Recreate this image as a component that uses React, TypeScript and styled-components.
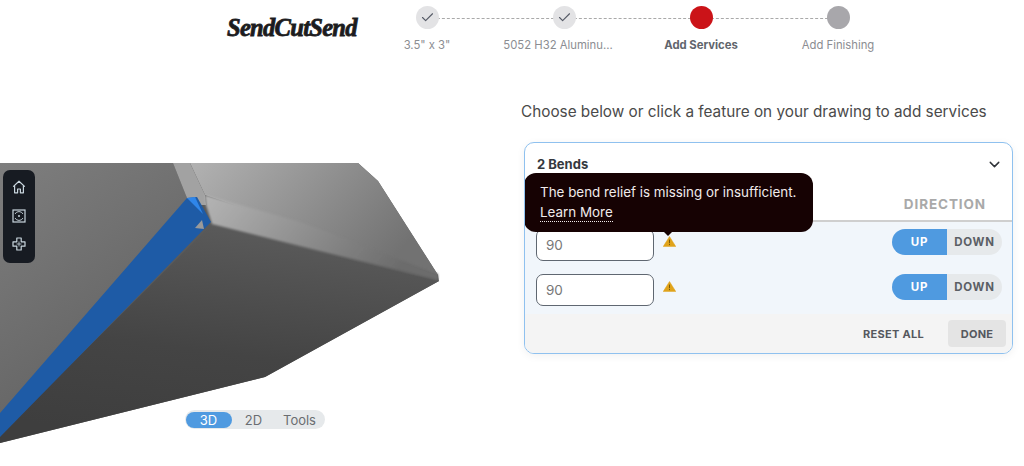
import styled, { createGlobalStyle } from "styled-components";
import { Check, ChevronDown } from "lucide-react";

const GlobalStyle = createGlobalStyle`
  html, body {
    margin: 0;
    padding: 0;
    background: #fff;
    font-family: Inter, "Open Sans", sans-serif;
  }
  * { box-sizing: border-box; }
`;

const steps = [
  { label: '3.5" x 3"', state: "done", nudge: 0 },
  { label: "5052 H32 Aluminu...", state: "done", nudge: 12 },
  { label: "Add Services", state: "active", nudge: 0 },
  { label: "Add Finishing", state: "todo", nudge: 0 },
];

const circleColors: Record<string, string> = {
  done: "#e3e3e5",
  active: "#cb1318",
  todo: "#a8a7ab",
};

const Page = styled.div`
  width: 1024px;
  height: 466px;
  overflow: hidden;
  display: flex;
  flex-direction: column;
`;

const Header = styled.header`
  height: 62px;
  display: flex;
  align-items: flex-start;
  padding-left: 226px;
`;

const Logo = styled.div`
  width: 132.5px;
  padding: 14px 0 0 1px;
  font-family: "Liberation Serif", serif;
  font-style: italic;
  font-weight: 700;
  font-size: 24.5px;
  line-height: 28px;
  letter-spacing: -0.7px;
  color: #1c1c1e;
  -webkit-text-stroke: 0.8px #1c1c1e;
  white-space: nowrap;
`;

const Stepper = styled.ol`
  display: flex;
  list-style: none;
  margin: 0;
  padding: 6px 0 0;
`;

const Step = styled.li`
  position: relative;
  width: 137px;
  display: flex;
  flex-direction: column;
  align-items: center;
  gap: 9px;

  &:not(:last-child)::after {
    content: "";
    position: absolute;
    top: 12px;
    left: 50%;
    width: 100%;
    border-top: 1px dashed #a9a9a9;
  }
`;

const Circle = styled.span<{ $state: string }>`
  position: relative;
  z-index: 1;
  width: 23px;
  height: 23px;
  border-radius: 50%;
  display: flex;
  align-items: center;
  justify-content: center;
  color: #555a66;
  background: ${(p) => circleColors[p.$state]};
`;

const StepLabel = styled.span<{ $active: boolean; $nudge: number }>`
  font-size: 11.3px;
  line-height: 14px;
  white-space: nowrap;
  margin-right: ${(p) => p.$nudge}px;
  font-weight: ${(p) => (p.$active ? 700 : 400)};
  color: ${(p) => (p.$active ? "#60646c" : "#8b8d92")};
`;

const Main = styled.main`
  flex: 1;
  display: flex;
  min-height: 0;
`;

const Viewer = styled.section`
  position: relative;
  width: 510px;
  height: 404px;
`;

const PartDrawing = styled.svg`
  display: block;
  width: 510px;
  height: 404px;
`;

const ViewTools = styled.div`
  position: absolute;
  top: 108px;
  left: 3px;
  width: 32px;
  height: 93px;
  border-radius: 7px;
  background: #171b22;
  display: flex;
  flex-direction: column;
  align-items: center;
  gap: 14.5px;
  padding-top: 10px;
  color: #c9d6de;
`;

const ViewSwitch = styled.div`
  position: absolute;
  top: 348px;
  left: 185px;
  width: 140px;
  height: 19px;
  border-radius: 10px;
  background: #e6e9eb;
  display: flex;
  align-items: center;
  padding: 0 1px;
`;

const ViewOption = styled.span<{ $on?: boolean }>`
  height: 16px;
  width: 46px;
  padding-right: ${(p) => (p.$on ? "1px" : "3px")};
  border-radius: 8px;
  display: flex;
  align-items: center;
  justify-content: center;
  font-size: 13px;
  color: ${(p) => (p.$on ? "#fff" : "#6a6d71")};
  background: ${(p) => (p.$on ? "#4f9ae0" : "transparent")};
`;

const Services = styled.section`
  width: 514px;
  padding: 40px 0 0 11px;
`;

const Prompt = styled.h2`
  margin: 0;
  font-size: 15.3px;
  line-height: 20px;
  font-weight: 400;
  color: #4a4a4a;
  white-space: nowrap;
`;

const Card = styled.div`
  position: relative;
  margin: 20px 0 0 3px;
  width: 489px;
  height: 212px;
  border: 1.5px solid #8fc1ef;
  border-radius: 10px;
  background: #fff;
  box-shadow: 0 2px 8px rgba(0, 0, 0, 0.06);
  display: flex;
  flex-direction: column;
  overflow: hidden;
`;

const CardTitle = styled.div`
  height: 43px;
  padding: 13px 9px 0 12px;
  display: flex;
  justify-content: space-between;
  align-items: flex-start;
  font-size: 13px;
  line-height: 17px;
  font-weight: 700;
  color: #35393f;
`;

const ColumnHead = styled.div`
  height: 36px;
  border-bottom: 2px solid #cfcfcf;
  padding: 9px 26px 0 0;
  text-align: right;
  font-size: 13.5px;
  line-height: 18px;
  font-weight: 700;
  letter-spacing: 0.9px;
  color: #a9a9a9;
`;

const Rows = styled.div`
  flex: 1;
  background: #f1f6fb;
  padding: 7px 10px 0 11px;
  display: flex;
  flex-direction: column;
  gap: 13px;
`;

const Row = styled.div`
  height: 32px;
  display: flex;
  align-items: flex-start;
`;

const AngleInput = styled.input`
  width: 118px;
  height: 32px;
  border: 1px solid #5f6771;
  border-radius: 7px;
  background: #fff;
  padding: 0 9px;
  font: inherit;
  font-size: 13.5px;
  color: #777;
  outline: none;
`;

const WarnIcon = styled.svg`
  margin: 7px 0 0 9px;
  flex: none;
`;

const Direction = styled.div`
  margin-left: auto;
  width: 110px;
  height: 26px;
  border-radius: 13px;
  overflow: hidden;
  display: flex;
`;

const DirectionOption = styled.span<{ $on?: boolean }>`
  flex: 1;
  display: flex;
  align-items: center;
  justify-content: center;
  font-size: 11.5px;
  font-weight: 700;
  letter-spacing: 0.7px;
  color: ${(p) => (p.$on ? "#fff" : "#5b5f65")};
  background: ${(p) => (p.$on ? "#4f9ae0" : "#e6e9eb")};
`;

const CardFooter = styled.div`
  height: 39px;
  background: #f4f4f4;
  display: flex;
  align-items: center;
  justify-content: flex-end;
  gap: 24px;
  padding: 0 6px 0 0;
`;

const FooterAction = styled.span`
  font-size: 11px;
  font-weight: 700;
  letter-spacing: 0.3px;
  color: #55585e;
`;

const DoneButton = styled(FooterAction)`
  width: 58px;
  height: 27px;
  border-radius: 4px;
  background: #e4e4e4;
  display: flex;
  align-items: center;
  justify-content: center;
`;

const Tooltip = styled.div`
  position: absolute;
  top: 30px;
  left: -1px;
  width: 289px;
  height: 59px;
  border-radius: 12px;
  background: #160203;
  padding: 10px 16px;
  color: #f0ebeb;
  font-size: 13.4px;
  line-height: 19.5px;
  white-space: nowrap;

  &::after {
    content: "";
    position: absolute;
    left: 139px;
    bottom: -4px;
    border-left: 5px solid transparent;
    border-right: 5px solid transparent;
    border-top: 5px solid #160203;
  }
`;

const LearnMore = styled.span`
  display: inline-block;
  line-height: 17px;
  border-bottom: 1px dotted #f0ebeb;
`;

function Warning() {
  return (
    <WarnIcon width="13" height="11" viewBox="0 0 13 11">
      <path d="M6.5 0.5 L12.8 10.6 H0.2 Z" fill="#e0a31a" stroke="#e0a31a" strokeLinejoin="round" strokeWidth="0.5" />
      <rect x="6" y="3.6" width="1" height="3.6" fill="#7a5a0c" />
      <rect x="6" y="8" width="1" height="1.1" fill="#7a5a0c" />
    </WarnIcon>
  );
}

function BendRow() {
  return (
    <Row>
      <AngleInput defaultValue="90" />
      <Warning />
      <Direction>
        <DirectionOption $on>UP</DirectionOption>
        <DirectionOption>DOWN</DirectionOption>
      </Direction>
    </Row>
  );
}

function Part() {
  return (
    <PartDrawing viewBox="0 62 510 404">
      <defs>
        <linearGradient id="leftFace" x1="0" y1="0" x2="0.6" y2="1">
          <stop offset="0" stopColor="#7e7e7e" />
          <stop offset="1" stopColor="#606060" />
        </linearGradient>
        <linearGradient id="lowerFace" x1="0.7" y1="0" x2="0.45" y2="1">
          <stop offset="0" stopColor="#5c5c5c" />
          <stop offset="0.6" stopColor="#444" />
          <stop offset="1" stopColor="#3e3e3e" />
        </linearGradient>
        <linearGradient id="upperFace" x1="0" y1="0" x2="1" y2="0.4">
          <stop offset="0" stopColor="#b2b2b2" />
          <stop offset="1" stopColor="#727272" />
        </linearGradient>
        <linearGradient id="band" x1="0" y1="0" x2="1" y2="0.3">
          <stop offset="0" stopColor="#b4b4b4" />
          <stop offset="1" stopColor="#6c6c6c" />
        </linearGradient>
        <filter id="soft" x="-5%" y="-5%" width="110%" height="110%">
          <feGaussianBlur stdDeviation="0.8" />
        </filter>
      </defs>
      <polygon points="0,163 358,163 378,181 438,275 439,281 265,377 0,443" fill="#5a5a5a" />
      <polygon points="0,163 173,163 187,198 205,222 0,414" fill="url(#leftFace)" />
      <polygon points="205,195 190,163 358,163 378,181 438,275" fill="url(#upperFace)" />
      <polygon points="212,224 300,248 439,281 265,377 0,443 0,435" fill="url(#lowerFace)" />
      <polygon points="173,163 190,163 205,195 206,205 199,205 187,198" fill="#a2a2a2" />
      <polygon points="205,195 300,222 438,274 438,280 300,246 212,224 206,205" fill="url(#band)" filter="url(#soft)" />
      <polygon points="187,198 197,197 211,222 0,437 0,413" fill="#1e5ba6" />
      <polygon points="187,198 195,197 203,214" fill="#2f86ea" />
      <polygon points="195,228 202,220 204,229" fill="#9a9a9a" />
    </PartDrawing>
  );
}

function HomeIcon() {
  return (
    <svg width="14" height="14" viewBox="0 0 14 14" fill="none" stroke="currentColor" strokeWidth="1.2">
      <path d="M1.2 6.6 7 1.2l5.8 5.4M2.6 5.6v7.2h3V9h2.8v3.8h3V5.6" strokeLinejoin="round" />
    </svg>
  );
}

function FitIcon() {
  return (
    <svg width="14" height="14" viewBox="0 0 14 14" fill="none" stroke="currentColor" strokeWidth="1.2">
      <rect x="1" y="1" width="12" height="12" />
      <path d="M3 5a4.5 4.5 0 0 1 8 0" strokeWidth="0.9" />
      <path d="M3 9a4.5 4.5 0 0 0 8 0" strokeWidth="0.9" />
      <circle cx="7" cy="7" r="1" fill="currentColor" stroke="none" />
    </svg>
  );
}

function CrossIcon() {
  return (
    <svg width="14" height="14" viewBox="0 0 14 14" fill="none" stroke="currentColor" strokeWidth="1.2">
      <path d="M4.8 1h4.4v3.8H13v4.4H9.2V13H4.8V9.2H1V4.8h3.8Z" strokeLinejoin="round" />
      <path d="M7 4.5v5M4.5 7h5" strokeWidth="0.8" />
    </svg>
  );
}

export default function App() {
  return (
    <Page>
      <GlobalStyle />
      <Header>
        <Logo>SendCutSend</Logo>
        <Stepper>
          {steps.map((s) => (
            <Step key={s.label}>
              <Circle $state={s.state}>
                {s.state === "done" && <Check size={15} strokeWidth={1.8} />}
              </Circle>
              <StepLabel $active={s.state === "active"} $nudge={s.nudge}>
                {s.label}
              </StepLabel>
            </Step>
          ))}
        </Stepper>
      </Header>
      <Main>
        <Viewer>
          <Part />
          <ViewTools>
            <HomeIcon />
            <FitIcon />
            <CrossIcon />
          </ViewTools>
          <ViewSwitch>
            <ViewOption $on>3D</ViewOption>
            <ViewOption>2D</ViewOption>
            <ViewOption>Tools</ViewOption>
          </ViewSwitch>
        </Viewer>
        <Services>
          <Prompt>Choose below or click a feature on your drawing to add services</Prompt>
          <Card>
            <CardTitle>
              2 Bends
              <ChevronDown size={17} strokeWidth={2} color="#2f3338" />
            </CardTitle>
            <ColumnHead>DIRECTION</ColumnHead>
            <Rows>
              <BendRow />
              <BendRow />
            </Rows>
            <CardFooter>
              <FooterAction>RESET ALL</FooterAction>
              <DoneButton>DONE</DoneButton>
            </CardFooter>
            <Tooltip>
              The bend relief is missing or insufficient.
              <br />
              <LearnMore>Learn More</LearnMore>
            </Tooltip>
          </Card>
        </Services>
      </Main>
    </Page>
  );
}
